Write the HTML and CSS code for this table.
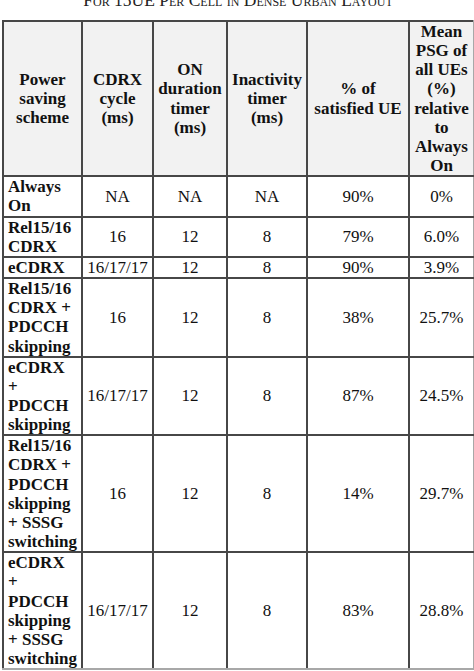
FILE: index.html
```html
<!DOCTYPE html>
<html>
<head>
<meta charset="utf-8">
<link rel="stylesheet" href="styles.css">
</head>
<body>
<div class="page">
  <div class="caption">For 15UE Per Cell in Dense Urban Layout</div>
  <table class="results">
    <colgroup>
      <col class="c1"><col class="c2"><col class="c3"><col class="c4"><col class="c5"><col class="c6">
    </colgroup>
    <thead>
      <tr>
        <th>Power<br>saving<br>scheme</th>
        <th>CDRX<br>cycle<br>(ms)</th>
        <th>ON<br>duration<br>timer<br>(ms)</th>
        <th>Inactivity<br>timer<br>(ms)</th>
        <th>% of<br>satisfied UE</th>
        <th>Mean<br>PSG of<br>all UEs<br>(%)<br>relative<br>to<br>Always<br>On</th>
      </tr>
    </thead>
    <tbody>
      <tr>
        <td class="scheme">Always<br>On</td>
        <td>NA</td><td>NA</td><td>NA</td><td>90%</td><td>0%</td>
      </tr>
      <tr>
        <td class="scheme">Rel15/16<br>CDRX</td>
        <td>16</td><td>12</td><td>8</td><td>79%</td><td>6.0%</td>
      </tr>
      <tr>
        <td class="scheme">eCDRX</td>
        <td>16/17/17</td><td>12</td><td>8</td><td>90%</td><td>3.9%</td>
      </tr>
      <tr>
        <td class="scheme">Rel15/16<br>CDRX +<br>PDCCH<br>skipping</td>
        <td>16</td><td>12</td><td>8</td><td>38%</td><td>25.7%</td>
      </tr>
      <tr>
        <td class="scheme">eCDRX<br>+<br>PDCCH<br>skipping</td>
        <td>16/17/17</td><td>12</td><td>8</td><td>87%</td><td>24.5%</td>
      </tr>
      <tr>
        <td class="scheme">Rel15/16<br>CDRX +<br>PDCCH<br>skipping<br>+ SSSG<br>switching</td>
        <td>16</td><td>12</td><td>8</td><td>14%</td><td>29.7%</td>
      </tr>
      <tr>
        <td class="scheme">eCDRX<br>+<br>PDCCH<br>skipping<br>+ SSSG<br>switching</td>
        <td>16/17/17</td><td>12</td><td>8</td><td>83%</td><td>28.8%</td>
      </tr>
    </tbody>
  </table>
</div>
</body>
</html>
```
FILE: styles.css
```css
html, body {
  margin: 0;
  padding: 0;
  background: #ffffff;
}
.page {
  width: 474px;
  height: 671px;
  overflow: hidden;
  font-family: "Liberation Serif", "Times New Roman", serif;
  color: #111111;
}
.caption {
  font-size: 17.5px;
  line-height: 20px;
  font-variant: small-caps;
  text-align: center;
  margin-top: -10px;
  height: 20px;
  margin-bottom: 10px;
  padding-left: 2px;
  color: #222222;
  white-space: nowrap;
}
.results {
  border-collapse: collapse;
  table-layout: fixed;
  width: 471px;
  margin-left: 2px;
  font-size: 17px;
  line-height: 19.15px;
}
.c1 { width: 79px; }
.c2 { width: 71px; }
.c3 { width: 74px; }
.c4 { width: 80px; }
.c5 { width: 102px; }
.c6 { width: 65px; }
.results th,
.results td {
  border: 2px solid #474747;
  padding: 0 4px;
  text-align: center;
  vertical-align: middle;
}
.results th {
  background: #f2f2f2;
  font-weight: bold;
}
.results td.scheme {
  text-align: left;
  font-weight: bold;
}
.results tr > :last-child {
  border-right-color: #a8a8a8;
}
.results tbody tr:last-child td {
  border-bottom-color: #a8a8a8;
}
```
